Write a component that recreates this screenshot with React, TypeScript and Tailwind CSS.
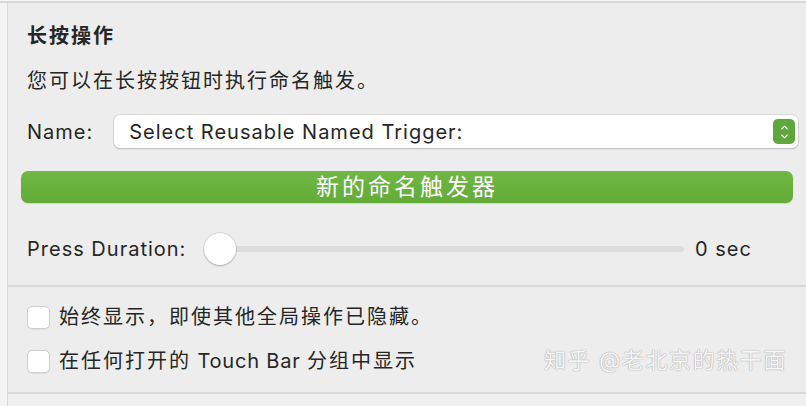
import { ChevronUp, ChevronDown } from "lucide-react";

const font = { fontFamily: '"Inter", "Noto Sans CJK SC", sans-serif' };

function Checkbox({ children }: { children: React.ReactNode }) {
  return (
    <label className="flex items-center gap-[9px] h-[44px]">
      <span className="w-[23px] h-[23px] rounded-[5px] bg-white border border-[#cfcfcf] shadow-[0_1px_1px_rgba(0,0,0,0.06)] shrink-0" />
      <span className="text-[20px] text-[#262626] leading-none tracking-[2px]">{children}</span>
    </label>
  );
}

export default function App() {
  return (
    <div className="w-[806px] h-[406px] bg-[#f3f3f3] overflow-hidden text-[#262626]" style={font}>
      <div className="h-full ml-[7px] border-l border-[#dadada] bg-[#ededed] flex flex-col">
        {/* top edge */}
        <div className="h-[3px] bg-[#f7f7f7] border-b-[2px] border-[#d9d9d9] -ml-[8px]" />

        <section className="pl-[19px] pr-[8px] pt-[21px]">
          <h2 className="text-[20px] font-bold leading-[24px] tracking-[2px]">长按操作</h2>
          <p className="mt-[21px] text-[20px] leading-[24px] tracking-[2px]">您可以在长按按钮时执行命名触发。</p>

          {/* named trigger picker */}
          <div className="mt-[22px] flex items-center gap-[21px]">
            <span className="text-[20px] tracking-[1px]">Name:</span>
            <div className="flex-1 h-[33px] rounded-[6px] bg-white shadow-[0_0_0_1px_rgba(0,0,0,0.08),0_1px_2px_rgba(0,0,0,0.15)] flex items-center pl-[15px] pr-[3px]">
              <span className="flex-1 text-[20px] leading-none tracking-[1px]">Select Reusable Named Trigger:</span>
              <span className="w-[22px] h-[25px] rounded-[5px] bg-[#5ea73a] flex flex-col items-center justify-center text-white">
                <ChevronUp size={11} strokeWidth={3} className="-mb-[2px]" />
                <ChevronDown size={11} strokeWidth={3} />
              </span>
            </div>
          </div>

          {/* create button */}
          <button className="mt-[23px] -ml-[6px] w-[772px] h-[32px] rounded-[7px] bg-gradient-to-b from-[#6fb843] to-[#63ab38] shadow-[0_1px_1px_rgba(0,0,0,0.12)] text-white text-[23px] leading-none tracking-[3px] flex items-center justify-center">
            新的命名触发器
          </button>

          {/* press duration */}
          <div className="mt-[29px] flex items-center h-[34px]">
            <span className="text-[20px] tracking-[1px] w-[177px]">Press Duration:</span>
            <div className="relative w-[480px] h-[34px] flex items-center">
              <div className="absolute left-[16px] right-0 h-[6px] rounded-full bg-[#dcdcdc]" />
              <div className="relative w-[32px] h-[32px] rounded-full bg-white shadow-[0_0_0_1px_rgba(0,0,0,0.08),0_1px_2px_rgba(0,0,0,0.2)]" />
            </div>
            <span className="ml-[11px] text-[20px] tracking-[1px]">0 sec</span>
          </div>
        </section>

        <div className="mt-[19px] h-[2px] bg-[#d8d8d8]" />

        <section className="pl-[19px] pt-[8px] relative">
          <Checkbox>始终显示，即使其他全局操作已隐藏。</Checkbox>
          <Checkbox>
            在任何打开的<span className="tracking-[0.8px]"> Touch Bar </span>分组中显示
          </Checkbox>
          <span
            className="absolute left-[536px] top-[57px] text-[22px] text-[#f6f6f6] tracking-[1.6px]"
            style={{ textShadow: "0 0 1px rgba(0,0,0,0.35), 0 0 2px rgba(0,0,0,0.15)" }}
          >
            知乎 @老北京的热干面
          </span>
        </section>

        <div className="mt-[9px] h-[2px] bg-[#d8d8d8]" />
        <div className="flex-1 bg-[#f0f0f0]" />
      </div>
    </div>
  );
}
